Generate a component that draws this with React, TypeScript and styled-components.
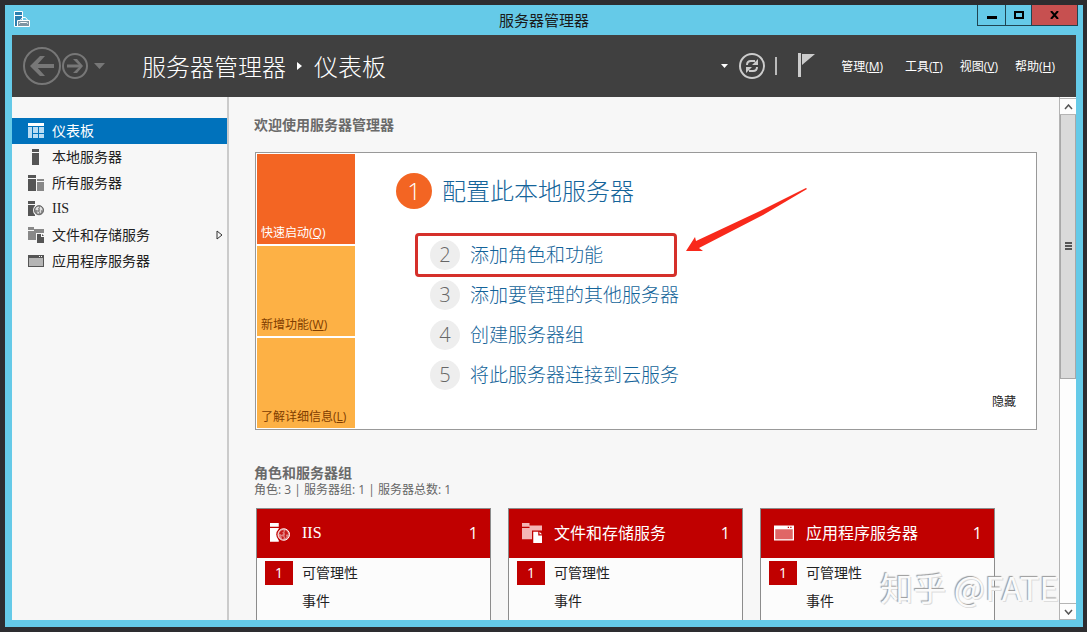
import React from 'react';
import styled, { createGlobalStyle, css } from 'styled-components';

const cjk = '"Noto Sans CJK SC", sans-serif';

const GlobalStyle = createGlobalStyle`
  * { box-sizing: border-box; }
  body { margin: 0; font-family: "Open Sans", ${cjk}; color: #222; }
  button { font: inherit; color: inherit; border: 0; padding: 0; background: none; cursor: pointer; }
  a { color: inherit; text-decoration: none; }
  h1, h2, h3, p, ul, ol { margin: 0; padding: 0; font-weight: 400; }
  ul, ol { list-style: none; }
  svg { display: block; flex: none; }
`;

const Desktop = styled.div`
  height: 100vh;
  padding: 5px 4px 5px 5px;
  background: #2d2d30;
`;

const Window = styled.div`
  height: 100%;
  display: flex;
  flex-direction: column;
  padding: 0 7px 7px;
  background: #65cae8;
`;

const TitleBar = styled.header`
  position: relative;
  display: flex;
  align-items: center;
  justify-content: center;
  height: 30px;
  flex: none;
  font-size: 15px;
  line-height: 20px;
  color: #1a1a1a;
`;

const AppIcon = styled.span`
  position: absolute;
  left: 2px;
  top: 6px;
`;

const WindowButtons = styled.div`
  position: absolute;
  top: 0;
  right: -2px;
  display: flex;
  border: 1px solid #1f4552;
  border-top: 0;
`;

const WindowButton = styled.button<{ $w: number; $close?: boolean }>`
  width: ${(p) => p.$w}px;
  height: 20px;
  display: flex;
  align-items: center;
  justify-content: center;
  background: ${(p) => (p.$close ? '#c75050' : 'transparent')};
  & + & { border-left: 1px solid #1f4552; }
`;

const Toolbar = styled.div`
  display: flex;
  align-items: center;
  height: 62px;
  flex: none;
  padding: 0 21px 0 11px;
  background: #404040;
  color: #fff;
`;

const NavButton = styled.button`
  display: flex;
  margin-right: 1px;
`;

const Crumbs = styled.h1`
  display: flex;
  align-items: center;
  gap: 11px;
  flex: 1;
  margin-left: 32px;
  font-size: 24px;
  line-height: 32px;
  font-weight: 300;
  font-family: ${cjk};
`;

const Tools = styled.div`
  display: flex;
  align-items: center;
  gap: 10px;
  margin-right: 25px;
`;

const Menu = styled.nav`
  display: flex;
  gap: 17px;
  padding-top: 2px;
  font-size: 12px;
  line-height: 18px;
`;

const MenuItem = styled.button<{ $wide?: boolean }>`
  margin-right: ${(p) => (p.$wide ? 5 : 0)}px;
  white-space: nowrap;
`;

const Body = styled.div`
  flex: 1;
  min-height: 0;
  display: flex;
  background: #f7f7f7;
`;

const Sidebar = styled.nav`
  width: 217px;
  flex: none;
  padding-top: 21px;
  border-right: 2px solid #cbcbcb;
`;

const SideLink = styled.a<{ $active?: boolean }>`
  display: flex;
  align-items: center;
  gap: 8px;
  height: 26px;
  padding: 0 4px 0 16px;
  font-size: 14px;
  line-height: 20px;
  color: ${(p) => (p.$active ? '#fff' : '#222')};
  background: ${(p) => (p.$active ? '#0072bc' : 'transparent')};
`;

const Label = styled.span<{ $serif?: boolean }>`
  flex: 1;
  ${(p) => p.$serif && css`font-family: "Liberation Serif", serif;`}
`;

const Main = styled.main`
  position: relative;
  flex: 1;
  min-width: 0;
  overflow: hidden;
  padding: 18px 22px 0 25px;
`;

const Heading = styled.h2`
  font-size: 14px;
  line-height: 20px;
  font-weight: 700;
  color: #6a6a6a;
`;

const Summary = styled.p`
  font-size: 12px;
  line-height: 14px;
  color: #666;
`;

const Welcome = styled.section`
  display: flex;
  height: 278px;
  margin: 17px 0 33px 1px;
  padding: 1px;
  border: 1px solid #999;
  background: #fff;
`;

const Tiles = styled.div`
  display: flex;
  flex-direction: column;
  gap: 2px;
  width: 98px;
  flex: none;
`;

const Tile = styled.button<{ $hot?: boolean }>`
  flex: 1;
  display: flex;
  align-items: flex-end;
  padding: 0 4px 2px;
  font-size: 12px;
  line-height: 18px;
  white-space: nowrap;
  color: ${(p) => (p.$hot ? '#fff' : '#7f3d00')};
  background: ${(p) => (p.$hot ? '#f36523' : '#fdb145')};
`;

const Steps = styled.div`
  position: relative;
  flex: 1;
  padding: 19px 0 0 41px;
`;

const StepList = styled.ol`
  padding: 26px 0 0 34px;
`;

const Step = styled.a<{ $main?: boolean }>`
  display: flex;
  align-items: center;
  gap: 10px;
  height: ${(p) => (p.$main ? 36 : 40)}px;
  font-family: ${cjk};
  font-weight: 300;
  font-size: ${(p) => (p.$main ? 24 : 19)}px;
  line-height: 28px;
  color: #14649a;
`;

const StepText = styled.span`
  padding-bottom: 2px;
`;

const Bullet = styled.span<{ $main?: boolean }>`
  display: flex;
  align-items: center;
  justify-content: center;
  width: ${(p) => (p.$main ? 36 : 30)}px;
  height: ${(p) => (p.$main ? 36 : 30)}px;
  border-radius: 50%;
  font-family: "Open Sans", sans-serif;
  font-size: ${(p) => (p.$main ? 24 : 20)}px;
  color: ${(p) => (p.$main ? '#fff' : '#666')};
  background: ${(p) => (p.$main ? '#f36523' : '#eee')};
`;

const Highlight = styled.div`
  position: absolute;
  left: 60px;
  top: 79px;
  width: 262px;
  height: 44px;
  border: 3px solid #d5302a;
  border-radius: 4px;
  pointer-events: none;
`;

const Arrow = styled.svg`
  position: absolute;
  left: 330px;
  top: 32px;
`;

const HideButton = styled.button`
  position: absolute;
  right: 19px;
  bottom: 17px;
  font-size: 12px;
  line-height: 18px;
`;

const Cards = styled.div`
  display: grid;
  grid-template-columns: repeat(3, 235px);
  gap: 17px;
  padding: 11px 0 0 2px;
`;

const Card = styled.article`
  height: 180px;
  border: 1px solid #8c8c8c;
  background: #fcfcfc;
`;

const CardHead = styled.h3`
  display: flex;
  align-items: center;
  gap: 12px;
  height: 49px;
  padding: 0 12px 1px 13px;
  font-size: 16px;
  line-height: 24px;
  color: #fff;
  background: #c00000;
`;

const CardBody = styled.ul`
  padding-top: 1px;
`;

const CardRow = styled.li`
  display: flex;
  align-items: center;
  gap: 9px;
  height: 28px;
  padding-left: 8px;
  font-size: 14px;
  line-height: 20px;
  color: #222;
`;

const Count = styled.span<{ $on?: boolean }>`
  width: 28px;
  height: 24px;
  line-height: 24px;
  text-align: center;
  color: #fff;
  background: ${(p) => (p.$on ? '#c00000' : 'transparent')};
`;

const Scrollbar = styled.div`
  display: flex;
  flex-direction: column;
  width: 17px;
  flex: none;
  padding-top: 1px;
  border-left: 1px solid #b4b4b4;
  background: #fdfdfd;
`;

const ScrollButton = styled.button`
  display: flex;
  align-items: center;
  justify-content: center;
  height: 17px;
  border: 1px solid #b4b4b4;
  border-width: 1px 0;
`;

const Track = styled.div`
  flex: 1;
`;

const Thumb = styled.div`
  display: flex;
  align-items: center;
  justify-content: center;
  height: 54%;
  border: 1px solid #a8a8a8;
  border-top: 0;
  background: #dadada;
`;

const Watermark = styled.span`
  position: absolute;
  right: 0;
  bottom: 9px;
  font-family: ${cjk};
  font-size: 33px;
  line-height: 48px;
  white-space: nowrap;
  color: #fafafa;
  text-shadow: -1px -1px 1px #999, 1px 1px 0 #ddd;
`;

type IconKind = 'dashboard' | 'local' | 'all' | 'iis' | 'files' | 'app';

function Icon({ kind, size = 16, a = '#555', b = '#888', bg = '#f7f7f7' }: {
  kind: IconKind; size?: number; a?: string; b?: string; bg?: string;
}) {
  return (
    <svg width={size} height={size} viewBox="0 0 16 16" aria-hidden="true">
      {kind === 'dashboard' && (
        <>
          <path fill={a} d="M0 0h16v3H0z" />
          <path fill={b} d="M0 4h4v11H0zM5 4h5v6H5zM11 4h5v6h-5zM5 11h5v4H5zM11 11h5v4h-5z" />
        </>
      )}
      {kind === 'local' && <path fill={a} d="M4 0h7v3H4zM4 4h7v12H4z" />}
      {kind === 'all' && (
        <>
          <path fill={a} d="M0 0h8v3H0zM0 4h8v12H0z" />
          <path fill={b} d="M9 4h7v2H9zM9 7h7v9H9z" />
        </>
      )}
      {kind === 'iis' && (
        <>
          <path fill={a} d="M0 0h7v3H0zM0 4h7v11H0z" />
          <circle cx="11" cy="9.2" r="6" fill={bg} />
          <circle cx="11" cy="9.2" r="4.6" fill={b} stroke={a} strokeWidth=".8" />
          <path
            fill={bg}
            opacity=".8"
            d="M7.200 8.500l1.300-2.200 2-.8.6 1-1.300 1.100.8 1-1.200.9-.8-.6zM9 10.400l1.800.5.3 1.200-1.200 1zM12.300 5.600l1.700 1.500.7 2.300-1.200-.4-.8.9.6 1.100-.9 1.200-.9-1.800.6-1.600-.6-1z"
          />
        </>
      )}
      {kind === 'files' && (
        <>
          <path fill={b} d="M0 0h6v2h10v5H8v6H0V4h6V3H0z" />
          <path fill={bg} d="M8 6h9v10H8z" />
          <path fill={a} d="M9 7h4v3h3v6H9zM14 7l2 2h-2z" />
        </>
      )}
      {kind === 'app' && (
        <>
          <path fill={a} d="M0 2h16v12H0z" />
          <path fill={b} d="M1 5h14v8H1z" />
          <path fill={bg} d="M11 3h1v1h-1zM13 3h1v1h-1z" />
        </>
      )}
    </svg>
  );
}

const sideItems: { kind: IconKind; text: string; more?: boolean; b?: string }[] = [
  { kind: 'dashboard', text: '仪表板' },
  { kind: 'local', text: '本地服务器' },
  { kind: 'all', text: '所有服务器' },
  { kind: 'iis', text: 'IIS' },
  { kind: 'files', text: '文件和存储服务', more: true },
  { kind: 'app', text: '应用程序服务器', b: '#b5b5b5' },
];

const menus = [['管理', 'M'], ['工具', 'T'], ['视图', 'V'], ['帮助', 'H']];
const tiles = [['快速启动', 'Q'], ['新增功能', 'W'], ['了解详细信息', 'L']];
const steps = ['添加角色和功能', '添加要管理的其他服务器', '创建服务器组', '将此服务器连接到云服务'];
const cards: { kind: IconKind; text: string; b: string }[] = [
  { kind: 'iis', text: 'IIS', b: '#e08080' },
  { kind: 'files', text: '文件和存储服务', b: '#f4b4b4' },
  { kind: 'app', text: '应用程序服务器', b: '#e06666' },
];

export default function App() {
  return (
    <Desktop>
      <GlobalStyle />
      <Window>
        <TitleBar>
          <AppIcon>
            <svg width="17" height="17" viewBox="0 0 17 17" aria-hidden="true">
              <path d="M.5 .5h8v15h-8z" fill="#2c7fb0" stroke="#fff" />
              <path d="M1 4.500h7" stroke="#fff" />
              <path d="M3.500 9.500h12v6h-12z" fill="#7e95a3" stroke="#fff" />
              <path d="M6.500 9l2-2.500h3l2 2.500M5 12.500l1.500-1h6l1.500 1" fill="none" stroke="#fff" />
            </svg>
          </AppIcon>
          服务器管理器
          <WindowButtons>
            <WindowButton $w={27} aria-label="最小化">
              <svg width="10" height="12"><path d="M0 7h10v3H0z" /></svg>
            </WindowButton>
            <WindowButton $w={26} aria-label="最大化">
              <svg width="10" height="8"><path d="M1 1h8v6H1z" fill="none" stroke="#000" strokeWidth="2" /></svg>
            </WindowButton>
            <WindowButton $w={46} $close aria-label="关闭">
              <svg width="9" height="8"><path d="M1 0l7 8M8 0L1 8" stroke="#000" strokeWidth="2" /></svg>
            </WindowButton>
          </WindowButtons>
        </TitleBar>

        <Toolbar>
          <NavButton aria-label="后退">
            <svg width="38" height="38" fill="none" stroke="#777">
              <circle cx="19" cy="19" r="18" strokeWidth="2" />
              <path d="M31 19H10" strokeWidth="4" />
              <path d="M17 9h5l-9 10 9 10h-5L7 19z" fill="#777" stroke="none" />
            </svg>
          </NavButton>
          <NavButton aria-label="前进">
            <svg width="26" height="26" fill="none" stroke="#777">
              <circle cx="13" cy="13" r="12" strokeWidth="2" />
              <path d="M5 13h13" strokeWidth="3" />
              <path d="M15 6h-4l7 7-7 7h4l6-7z" fill="#777" stroke="none" />
            </svg>
          </NavButton>
          <NavButton aria-label="历史记录">
            <svg width="20" height="8"><path d="M5 1h11l-5.500 6z" fill="#777" /></svg>
          </NavButton>
          <Crumbs>
            服务器管理器
            <svg width="6" height="10"><path d="M0 1l5 4-5 4z" fill="#fff" /></svg>
            仪表板
          </Crumbs>
          <Tools>
            <button aria-label="展开">
              <svg width="8" height="5"><path d="M0 0h7l-3.500 4z" fill="#fff" /></svg>
            </button>
            <button aria-label="刷新">
              <svg width="26" height="26" viewBox="0 0 26 26" fill="none" stroke="#ccc">
                <circle cx="13" cy="13" r="12" strokeWidth="2" />
                <path d="M8 12c0-3 2-4 4-4h4M18 14c0 3-2 4-4 4h-4" strokeWidth="2" />
                <path d="M19 6v6h-6zM7 20v-6h6z" fill="#ccc" stroke="none" />
              </svg>
            </button>
            <svg width="3" height="18" aria-hidden="true"><path d="M0 0h2v18H0z" fill="#bbb" /></svg>
            <button aria-label="通知">
              <svg width="28" height="26"><path d="M10 0h3v24h-3zM14 1h13L14 12z" fill="#ccc" /></svg>
            </button>
          </Tools>
          <Menu>
            {menus.map(([t, k], i) => (
              <MenuItem key={k} $wide={i === 0}>{t}(<u>{k}</u>)</MenuItem>
            ))}
          </Menu>
        </Toolbar>

        <Body>
          <Sidebar>
            <ul>
              {sideItems.map((s, i) => (
                <li key={s.text}>
                  <SideLink href="#" $active={i === 0}>
                    <Icon kind={s.kind} a={i === 0 ? '#fff' : '#555'} b={i === 0 ? '#b9dcf3' : s.b} />
                    <Label $serif={s.kind === 'iis'}>{s.text}</Label>
                    {s.more && (
                      <svg width="7" height="10" aria-hidden="true">
                        <path d="M1 1l5 4-5 4z" fill="none" stroke="#333" />
                      </svg>
                    )}
                  </SideLink>
                </li>
              ))}
            </ul>
          </Sidebar>

          <Main>
            <Heading>欢迎使用服务器管理器</Heading>
            <Welcome>
              <Tiles>
                {tiles.map(([t, k], i) => (
                  <Tile key={k} $hot={i === 0}><span>{t}(<u>{k}</u>)</span></Tile>
                ))}
              </Tiles>
              <Steps>
                <Step href="#" $main><Bullet $main>1</Bullet><StepText>配置此本地服务器</StepText></Step>
                <StepList>
                  {steps.map((s, i) => (
                    <li key={s}><Step href="#"><Bullet>{i + 2}</Bullet><StepText>{s}</StepText></Step></li>
                  ))}
                </StepList>
                <Highlight />
                <Arrow width="124" height="68" aria-hidden="true">
                  <path d="M1 65l9-14 1 4 64-30 46-23 1 1-44 26-64 33 4 3z" fill="#f8291b" />
                </Arrow>
                <HideButton>隐藏</HideButton>
              </Steps>
            </Welcome>
            <Heading>角色和服务器组</Heading>
            <Summary>角色: 3 | 服务器组: 1 | 服务器总数: 1</Summary>
            <Cards>
              {cards.map((c) => (
                <Card key={c.text}>
                  <CardHead>
                    <Icon kind={c.kind} size={20} a="#fff" b={c.b} bg="#c00000" />
                    <Label $serif={c.kind === 'iis'}>{c.text}</Label>
                    <span>1</span>
                  </CardHead>
                  <CardBody>
                    <CardRow><Count $on>1</Count>可管理性</CardRow>
                    <CardRow><Count />事件</CardRow>
                  </CardBody>
                </Card>
              ))}
            </Cards>
            <Watermark>知乎 @FATE</Watermark>
          </Main>

          <Scrollbar>
            <ScrollButton aria-label="向上滚动">
              <svg width="9" height="6"><path d="M1 5l3.500-4L8 5" fill="none" stroke="#555" strokeWidth="1.500" /></svg>
            </ScrollButton>
            <Track>
              <Thumb>
                <svg width="7" height="8"><path d="M0 0h7v2H0zM0 3h7v2H0zM0 6h7v2H0z" fill="#555" /></svg>
              </Thumb>
            </Track>
            <ScrollButton aria-label="向下滚动">
              <svg width="9" height="6"><path d="M1 1l3.500 4L8 1" fill="none" stroke="#555" strokeWidth="1.500" /></svg>
            </ScrollButton>
          </Scrollbar>
        </Body>
      </Window>
    </Desktop>
  );
}
